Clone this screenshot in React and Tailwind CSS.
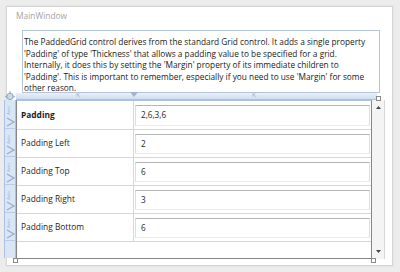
import React from 'react';

function Crosshair() {
  return (
    <svg width="10" height="11" viewBox="0 0 10 11" className="absolute left-[1px] top-[-2px]">
      <circle cx="5" cy="5.5" r="3.2" fill="#c9d8ea" stroke="#7d98bb" strokeWidth="0.8" />
      <path d="M5 0 L6.3 1.6 L3.7 1.6 Z M5 11 L6.3 9.4 L3.7 9.4 Z M0 5.5 L1.6 4.2 L1.6 6.8 Z M10 5.5 L8.4 4.2 L8.4 6.8 Z" fill="#7d98bb" />
    </svg>
  );
}

function Chevron() {
  return (
    <svg width="10" height="10" viewBox="0 0 10 10" className="absolute left-[1px] bottom-[1px]">
      <polyline points="1,1 8,5 1,9" fill="none" stroke="#94aed0" strokeWidth="1.3" />
    </svg>
  );
}

function RulerSeg({ h }) {
  return (
    <div className={`relative ${h} border-b border-[#b9cde6]`}>
      <div className="absolute left-[2px] top-[6px] text-[4px] leading-[4px] text-[#9fb4d0] [writing-mode:vertical-rl] rotate-180">Auto</div>
      <Chevron />
    </div>
  );
}

function Row({ label, value, bold, first }) {
  return (
    <div className={`flex ${first ? 'h-[29px]' : 'h-[28px]'} border-b border-[#c7daee]`}>
      <div className={`w-[117px] border-r border-[#c7daee] flex items-center pl-[4px] text-[8.4px] text-[#1e1e1e] ${bold ? 'font-bold' : ''}`}>
        {label}
      </div>
      <div className="flex-1 pl-[1px] pr-[1px] pt-[4px]">
        <div className={`${first ? 'h-[21px]' : 'h-[20px]'} border border-[#dcdde2] border-t-[#b3b5bb] border-b-[#e6ebf0] bg-white flex items-center pl-[5px] text-[8.2px] text-[#1e1e1e]`}>
          {value}
        </div>
      </div>
    </div>
  );
}

export default function App() {
  const rows = [
    { label: 'Padding', value: '2,6,3,6', bold: true, first: true },
    { label: 'Padding Left', value: '2' },
    { label: 'Padding Top', value: '6' },
    { label: 'Padding Right', value: '3' },
    { label: 'Padding Bottom', value: '6' },
  ];
  return (
    <div className="w-[400px] h-[272px] bg-[#ececec] pt-[6px] pl-[6px] overflow-hidden font-['Open_Sans',sans-serif]">
      <div className="w-[387px] h-[260px] bg-white border border-[#d6d6d6] shadow-[0_0_2px_rgba(0,0,0,0.08)] flex flex-col">
        <div className="h-[23px] pl-[9px] pt-[3px] text-[8.4px] leading-[12px] text-[#a3a3a3]">MainWindow</div>
        <div className="ml-[15px] w-[358px] h-[63px] border border-[#b4c5da] pl-[1px] pt-[5px] text-[8.3px] leading-[11.6px] text-[#1a1a1a] whitespace-nowrap">
          <div>The PaddedGrid control derives from the standard Grid control. It adds a single property</div>
          <div>'Padding' of type 'Thickness' that allows a padding value to be specified for a grid.</div>
          <div>Internally, it does this by setting the 'Margin' property of its immediate children to</div>
          <div>'Padding'. This is important to remember, especially if you need to use 'Margin' for some</div>
          <div>other reason.</div>
        </div>
        <div className="ml-[-3px] flex flex-col relative">
          <div className="flex h-[7px]">
            <div className="w-[12px] relative"><Crosshair /></div>
            <div className="relative w-[361px] bg-gradient-to-b from-[#e9f0f9] to-[#cfdeef] border-b border-[#a9c1df]">
              <svg width="8" height="6" viewBox="0 0 8 6" className="absolute left-[114px] top-[-1px]">
                <path d="M0 0 L8 0 L4 5 Z" fill="#9db5d3" />
              </svg>
              <div className="absolute left-[60px] top-[0px] text-[5px] leading-[5px] text-[#9aa8b8]">⇱</div>
              <div className="absolute left-[236px] top-[0px] text-[5px] leading-[5px] text-[#9aa8b8]">⇱</div>
              <div className="absolute right-[-4px] bottom-[-2px] w-[5px] h-[5px] border border-[#8a8a8a] bg-white"></div>
            </div>
          </div>
          <div className="flex">
            <div className="w-[12px] h-[158px] relative bg-[#d9e6f5] border-l border-r border-[#aac2df] flex flex-col">
              <RulerSeg h="h-[29px]" />
              <RulerSeg h="h-[28px]" />
              <RulerSeg h="h-[28px]" />
              <RulerSeg h="h-[28px]" />
              <RulerSeg h="h-[28px]" />
              <div className="absolute left-[8px] bottom-[-5px] w-[5px] h-[5px] border border-[#8a8a8a] bg-white"></div>
            </div>
            <div className="w-[356px] h-[159px] border border-[#868686] border-t-[#aac2df] flex flex-col relative">
              {rows.map((r) => (
                <Row key={r.label} {...r} />
              ))}
              <div className="absolute right-[-5px] bottom-[-5px] w-[5px] h-[5px] border border-[#8a8a8a] bg-white"></div>
            </div>
            <div className="w-[13px] h-[159px] bg-[#f4f4f4] border-r border-[#d7d7d7] flex flex-col justify-between items-center py-[6px]">
              <svg width="5" height="3" viewBox="0 0 5 3"><path d="M0 3 L5 3 L2.5 0 Z" fill="#444" /></svg>
              <svg width="5" height="3" viewBox="0 0 5 3"><path d="M0 0 L5 0 L2.5 3 Z" fill="#444" /></svg>
            </div>
          </div>
        </div>
      </div>
    </div>
  );
}
